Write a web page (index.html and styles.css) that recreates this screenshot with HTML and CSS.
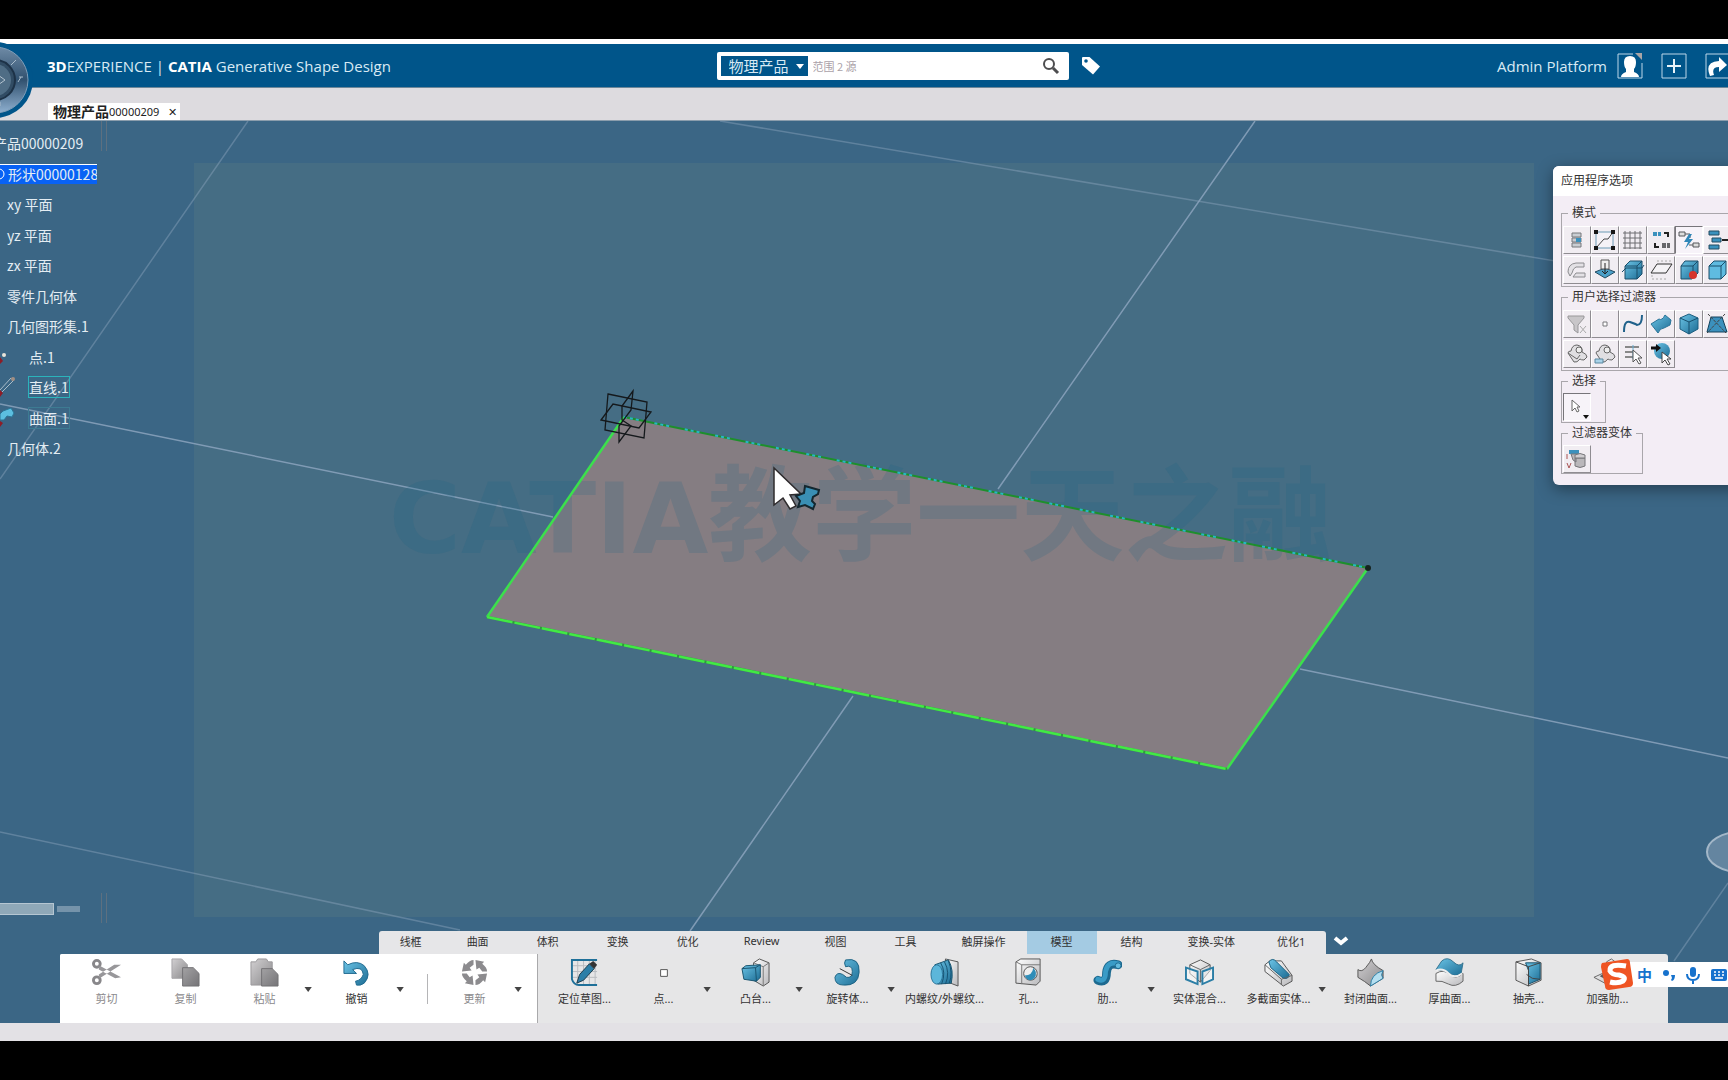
FILE: index.html
```html
<!DOCTYPE html>
<html lang="zh-CN">
<head>
    <meta charset="UTF-8">
    <meta name="viewport" content="width=device-width, initial-scale=1.0">
    <title>3DEXPERIENCE | CATIA Generative Shape Design</title>
    <link rel="stylesheet" href="styles.css">
</head>
<body>
    <!-- shared gradients -->
    <svg class="defs" aria-hidden="true">
        <defs>
            <linearGradient id="blue" x1="0" y1="0" x2="1" y2="1">
                <stop offset="0" stop-color="#6cc4e6"/>
                <stop offset="1" stop-color="#1c6c94"/>
            </linearGradient>
            <linearGradient id="grey" x1="0" y1="0" x2="1" y2="1">
                <stop offset="0" stop-color="#d2d0d2"/>
                <stop offset="1" stop-color="#8a898b"/>
            </linearGradient>
            <linearGradient id="dark" x1="0" y1="0" x2="1" y2="1">
                <stop offset="0" stop-color="#a3a2a4"/>
                <stop offset="1" stop-color="#757477"/>
            </linearGradient>
            <linearGradient id="white" x1="0" y1="0" x2="1" y2="1">
                <stop offset="0" stop-color="#ffffff"/>
                <stop offset="1" stop-color="#b9b9bc"/>
            </linearGradient>
            <linearGradient id="ring" x1="0" y1="0" x2="0" y2="1">
                <stop offset="0" stop-color="#6f8ba6"/>
                <stop offset="0.5" stop-color="#31516f"/>
                <stop offset="1" stop-color="#8fb0d0"/>
            </linearGradient>
        </defs>
    </svg>

    <header class="topbar">
        <h1 class="brand"><b>3D</b>EXPERIENCE | <b>CATIA</b> Generative Shape Design</h1>

        <form class="search">
            <div class="search-box">
                <span class="scope">
                    <select aria-label="搜索类型">
                        <option>物理产品</option>
                    </select>
                </span>
                <input type="text" placeholder="范围 2 源" aria-label="搜索">
                <button type="button" aria-label="搜索">
                    <svg width="18" height="18" viewBox="0 0 18 18"><circle cx="7" cy="7" r="5" fill="none" stroke="#4d4d4f" stroke-width="2"/><path d="M11 11l5 5" stroke="#4d4d4f" stroke-width="3"/></svg>
                </button>
            </div>
            <button type="button" aria-label="标签">
                <svg width="20" height="20" viewBox="0 0 20 20"><path d="M1 2q0-1 1-1h6.500l10.500 9.500-7 8L1 9z" fill="#fff"/><circle cx="5" cy="5" r="1.800" fill="#00558a"/></svg>
            </button>
        </form>

        <div class="account">
            <span>Admin Platform</span>
            <button type="button" aria-label="用户">
                <svg width="26" height="26" viewBox="0 0 26 26"><path d="M16 1H1v24h24V10" fill="none" stroke="#bcd7e8"/><path d="M4 24q0-3 5-5V16Q7 14 7 9q0-6 6-6t6 6q0 5-2 7v3q5 2 5 5z" fill="#fff"/><path d="M18 0h7v7z" fill="#a9a5a6"/></svg>
            </button>
            <button type="button" aria-label="添加">
                <svg width="26" height="26" viewBox="0 0 26 26"><path d="M1 1h24v24H1z" fill="none" stroke="#bcd7e8"/><path d="M6 13h14M13 6v14" stroke="#e9f3f8" stroke-width="2"/></svg>
            </button>
            <button type="button" aria-label="共享">
                <svg width="26" height="26" viewBox="0 0 26 26"><path d="M1 1h24v24H1z" fill="none" stroke="#bcd7e8"/><path d="M5 23Q-1 9 14 8V4l8 8-8 7v-5Q6 14 9 22z" fill="#fff"/></svg>
            </button>
        </div>

        <svg class="compass" width="34" height="78" viewBox="0 0 34 78">
            <circle cx="-5" cy="39" r="38" fill="#00558a"/>
            <circle cx="-5" cy="39" r="33" fill="url(#ring)" stroke="#7f9db8"/>
            <circle cx="-5" cy="39" r="20" fill="#314c64" stroke="#1d3247" stroke-width="2"/>
            <circle cx="-5" cy="39" r="16" fill="#4f6d85"/>
            <path d="M-2 34l7 5-7 5z" fill="none" stroke="#b3c2ce" stroke-width="1"/>
            <path d="M11 24l5-5M21 36l-3 5M23 36h-4M0 61v4" stroke="#a9bccb" fill="none"/>
        </svg>
    </header>

    <nav class="doc-tabs">
        <div class="doc-tab"><b>物理产品</b><span>00000209</span><button type="button" aria-label="关闭">✕</button></div>
    </nav>

    <main class="stage">
        <svg class="scene" viewBox="0 0 1728 902" preserveAspectRatio="xMidYMid slice">
            <rect x="194" y="42" width="1340" height="754" fill="#456d84"/>
            <g stroke="#8ba3bd" stroke-width="1.500">
                <path d="M248 0L0 358M720 0l1008 169M0 711l460 98M1728 762l-54 78" stroke-opacity=".45"/>
                <path d="M0 283l553 113M1300 548l428 89M1255 0L998 368M853 575L690 810" stroke-opacity=".85"/>
            </g>
            <ellipse cx="1740" cy="731" rx="33" ry="20" fill="#6485a0" stroke="#a3b7c8" stroke-width="2"/>

            <path d="M624 296l744 151-141 201-740-152z" fill="#857d82"/>
            <text x="389" y="432" class="watermark"><tspan class="latin">CATIA</tspan>教学一天之融</text>
            <path d="M624 296L487 496M1368 447l-141 201" stroke="#3be04c" stroke-width="2.500"/>
            <path d="M487 496l740 152" stroke="#2f9a3c" stroke-width="2.500"/>
            <path d="M487 496l740 152" stroke="#42e945" stroke-width="2.500" stroke-dasharray="26 2"/>
            <path d="M624 296l744 151" stroke="#1d8f2c" stroke-width="2"/>
            <path d="M624 296l744 151" stroke="#27b7c4" stroke-width="2" stroke-dasharray="3 3 3 3 3 16"/>
            <circle cx="1368" cy="447" r="3" fill="#16241f"/>

            <!-- origin planes -->
            <g fill="none" stroke="#15191c" stroke-width="1.300">
                <path d="M608 273l39 8-3 36-39-8z"/>
                <path d="M601 299l12-16 38 8-12 16z"/>
                <path d="M633 270l-11 15v14l9 6-12 16V305l12-16z"/>
            </g>

            <!-- cursor with pin -->
            <path d="M774 347v37l9-7 7 11 6-3-6-11 11-1z" fill="#fff" stroke="#2f2c2e" stroke-width="1.500"/>
            <path d="M805 365l14 4-1 4-5 3-1 4 3 3-2 5-8-4-7 2 2-6-4-5 8-3z" fill="#3a8fb4" stroke="#14272f" stroke-width="2"/>
        </svg>

        <ul class="tree">
            <li class="root">产品00000209</li>
            <li class="selected"><svg width="11" height="12" viewBox="0 0 11 12"><circle cx="2" cy="6" r="5" fill="none" stroke="#fff"/></svg>形状00000128</li>
            <li>xy 平面</li>
            <li>yz 平面</li>
            <li>zx 平面</li>
            <li>零件几何体</li>
            <li>几何图形集.1</li>
            <li class="leaf"><svg width="16" height="20" viewBox="0 0 16 20"><circle cx="4" cy="8" r="2" fill="#e9e4da"/><path d="M0 10l3 4-3 3z" fill="#8e1c26"/></svg><span>点.1</span></li>
            <li class="leaf"><svg width="16" height="20" viewBox="0 0 16 20"><path d="M0 13L11 1M2 15L14 3" stroke="#a9bcc8"/><path d="M0 13l3 3-3 4z" fill="#8e1c26"/><circle cx="13" cy="2" r="2" fill="#a28f84"/></svg><span class="picked">直线.1</span></li>
            <li class="leaf"><svg width="16" height="20" viewBox="0 0 16 20"><path d="M3 3l8-3 3 5-2 4-5-1-3 4H0V6z" fill="#5cbfe0" stroke="#2b7596"/><path d="M0 13l3 2-3 4z" fill="#8e1c26"/></svg><span class="hinted">曲面.1</span></li>
            <li>几何体.2</li>
        </ul>
        <span class="grip grip-top"></span>
        <span class="grip grip-bottom"></span>
        <div class="scroller"><i></i><b></b></div>

        <aside class="options">
            <h2>应用程序选项</h2>
            <fieldset>
                <legend>模式</legend>
                <div class="tools">
                    <button type="button" aria-label="结构树"><svg viewBox="0 0 24 24"><path d="M7 5h9v4H7zM7 10h9v4H7zM7 15h9v4H7z" fill="#c9cdd2" stroke="#77797d"/><path d="M11 10h5v4h-5z" fill="#3b91bd"/></svg></button>
                    <button type="button" aria-label="框选"><svg viewBox="0 0 24 24"><path d="M3 4h17v16H3z" fill="#f5f2f7" stroke="#6d9ab5"/><path d="M3 20l8-9h4l5-7" stroke="#444" fill="none"/><path d="M1 2h4v4H1zM18 2h4v4h-4zM1 18h4v4H1zM18 18h4v4h-4z" fill="#161616"/></svg></button>
                    <button type="button" aria-label="网格"><svg viewBox="0 0 24 24"><path d="M4 3v18M9 3v18M14 3v18M19 3v18M2 5h19M2 10h19M2 15h19M2 20h19" stroke="#6c6c70"/></svg></button>
                    <button type="button" aria-label="交换"><svg viewBox="0 0 24 24"><path d="M4 4h4v4H4zM9 4h3v4H9z" fill="#3b91bd"/><path d="M15 5h4v4M10 19H6v-4" fill="none" stroke="#222" stroke-width="2"/><path d="M13 15h4v5h-4zM18 15h3v5h-3z" fill="#66666a"/></svg></button>
                    <button type="button" class="pressed" aria-label="快速更新"><svg viewBox="0 0 24 24"><path d="M2 4h6v4H2zM16 15h6v4h-6z" fill="#ddd" stroke="#55575a"/><path d="M8 6h5v4M12 17h4" stroke="#55575a" fill="none"/><path d="M12 6L7 14h4l-3 7 8-10h-4l3-5z" fill="#2f86b8"/></svg></button>
                    <button type="button" aria-label="层级"><svg viewBox="0 0 24 24"><path d="M4 3h10v4H4zM7 10h9v4H7zM4 17h10v4H4z" fill="#3b91bd" stroke="#244c62"/><path d="M17 12h6" stroke="#222" stroke-width="2"/></svg></button>
                    <button type="button" aria-label="路径"><svg viewBox="0 0 24 24"><path d="M3 14q0-8 8-9h8v4h-8q-3 1-4 6l-2 3zM8 19h12v-4h-9z" fill="#e3e1e5" stroke="#8c8c90"/></svg></button>
                    <button type="button" aria-label="工作平面"><svg viewBox="0 0 24 24"><path d="M2 14l10-4 10 4-10 6z" fill="#4ba0c9" stroke="#244c62"/><path d="M8 2h8v9H8z" fill="#eee" stroke="#555"/><path d="M12 5v11M9 13l3 3 3-3" stroke="#222" fill="none"/></svg></button>
                    <button type="button" aria-label="实体"><svg viewBox="0 0 24 24"><path d="M4 8l5-5h12v13l-5 5H4z" fill="url(#blue)" stroke="#1b4e6b"/><path d="M4 8h12v13M16 8l5-5M1 14l4-4h16l2-3" stroke="#1b4e6b" fill="none"/></svg></button>
                    <button type="button" aria-label="平面"><svg viewBox="0 0 24 24"><path d="M2 15L8 6h15l-6 9z" fill="#f5f3f6" stroke="#333"/><path d="M3 21h15M3 17v4M8 3h14" stroke="#aaa" stroke-dasharray="2 2"/></svg></button>
                    <button type="button" aria-label="停用"><svg viewBox="0 0 24 24"><path d="M4 8l4-5h13v12l-6 6H4z" fill="url(#blue)" stroke="#1b4e6b"/><path d="M4 8h12v12M16 8l5-5" stroke="#1b4e6b" fill="none"/><circle cx="16" cy="17" r="4" fill="#d6352c"/></svg></button>
                    <button type="button" aria-label="透明"><svg viewBox="0 0 24 24"><path d="M4 8l5-5h12v13l-5 5H4z" fill="#5fbbe0" stroke="#1b4e6b"/><path d="M4 8h12v13M16 8l5-5" stroke="#1b4e6b" fill="none"/></svg></button>
                </div>
            </fieldset>
            <fieldset>
                <legend>用户选择过滤器</legend>
                <div class="tools">
                    <button type="button" aria-label="过滤器"><svg viewBox="0 0 24 24"><path d="M3 4h16v2l-6 7v8l-4-3v-5L3 6z" fill="#c8c6c9" stroke="#98979a"/><path d="M15 14l6 7M21 14l-6 7" stroke="#aaa"/></svg></button>
                    <button type="button" aria-label="点过滤"><svg viewBox="0 0 24 24"><path d="M10 10h4v4h-4z" fill="#fff" stroke="#77777b"/></svg></button>
                    <button type="button" aria-label="曲线过滤"><svg viewBox="0 0 24 24"><path d="M3 20Q3 8 9 10t7 3q5 0 5-10" fill="none" stroke="#20618a" stroke-width="2"/></svg></button>
                    <button type="button" aria-label="曲面过滤"><svg viewBox="0 0 24 24"><path d="M2 12l8-5q3 2 6-4l6 5-1 5-6 3q-4 0-6 5z" fill="url(#blue)" stroke="#2a7499"/></svg></button>
                    <button type="button" aria-label="体过滤"><svg viewBox="0 0 24 24"><path d="M3 6l9-4 9 4v11l-9 5-9-5z" fill="url(#blue)" stroke="#1b5e80"/><path d="M3 6l9 4 9-4M12 10v12" stroke="#164f6d" fill="none"/></svg></button>
                    <button type="button" aria-label="网格过滤"><svg viewBox="0 0 24 24"><path d="M6 5h11l5 15H2z" fill="#3b91bd" stroke="#14435c"/><path d="M3 2l18 19M20 2L2 21" stroke="#444" stroke-dasharray="3 1"/></svg></button>
                    <button type="button" aria-label="特征"><svg viewBox="0 0 24 24"><path d="M3 11q0-2 3-2 1-6 6-6 6 1 5 7 5 2 5 5l-3 3q-3 0-4-1-3 4-6 3z" fill="#e0dfe2" stroke="#666"/><circle cx="14" cy="8" r="3" fill="#eee" stroke="#666"/><path d="M3 11l9 6 3-4" stroke="#666" fill="none"/></svg></button>
                    <button type="button" aria-label="子特征"><svg viewBox="0 0 24 24"><path d="M3 11q0-2 3-2 1-6 6-6 6 1 5 7 5 2 5 5l-3 3q-3 0-4-1-3 4-6 3z" fill="#e0dfe2" stroke="#666"/><circle cx="14" cy="8" r="3" fill="#eee" stroke="#666"/><path d="M2 17h8v4H2z" fill="#a8d2e8" stroke="#5b88a0"/></svg></button>
                    <button type="button" aria-label="列表选择"><svg viewBox="0 0 24 24"><path d="M4 5h14M4 10h8M4 15h8" stroke="#888" stroke-width="2"/><path d="M12 3v14" stroke="#64acd0"/><path d="M12 8v12l3-3 3 5 2-1-3-5h4z" fill="#fff" stroke="#555"/></svg></button>
                    <button type="button" aria-label="选择对象"><svg viewBox="0 0 24 24"><circle cx="13" cy="9" r="8" fill="url(#blue)"/><path d="M2 6h5" stroke="#111" stroke-width="3"/><path d="M7 2l5 4-5 4z" fill="#111"/><path d="M13 10v11l3-3 3 5 2-1-3-5h4z" fill="#fff" stroke="#444"/></svg></button>
                </div>
            </fieldset>
            <fieldset class="fit">
                <legend>选择</legend>
                <div class="tools">
                    <button type="button" class="pressed" aria-label="箭头"><svg viewBox="0 0 24 24"><path d="M7 5v11l3-3 2 4 2-1-2-4h3z" fill="#fff" stroke="#666"/><path d="M18 20h6l-3 4z" fill="#111"/></svg></button>
                </div>
            </fieldset>
            <fieldset class="fit wide">
                <legend>过滤器变体</legend>
                <div class="tools">
                    <button type="button" aria-label="变体"><svg viewBox="0 0 24 24"><path d="M4 3h10v4H4z" fill="#3b91bd"/><path d="M2 16l2 5 2-5M2 7v5" stroke="#a55" fill="none"/><path d="M6 7h7l-2 4v4l-3-2zM10 11h10v8q-5 3-10 0z" fill="#b9b7ba" stroke="#77777b"/><path d="M10 8q5-3 10 0v3H10z" fill="#cfcdd0" stroke="#77777b"/></svg></button>
                </div>
            </fieldset>
        </aside>

        <div class="deck">
            <nav class="sections">
                <div class="section-list">
                    <button type="button">线框</button>
                    <button type="button">曲面</button>
                    <button type="button">体积</button>
                    <button type="button">变换</button>
                    <button type="button">优化</button>
                    <button type="button">Review</button>
                    <button type="button">视图</button>
                    <button type="button">工具</button>
                    <button type="button">触屏操作</button>
                    <button type="button" class="active">模型</button>
                    <button type="button">结构</button>
                    <button type="button">变换-实体</button>
                    <button type="button">优化1</button>
                </div>
                <button type="button" class="collapse" aria-label="折叠"><svg width="16" height="12" viewBox="0 0 16 12"><path d="M2 3l6 5 6-5" fill="none" stroke="#fff" stroke-width="4"/></svg></button>
            </nav>

            <div class="actions">
                <div class="common">
                    <button type="button" class="off"><svg viewBox="0 0 30 30"><g fill="none" stroke="#88878a" stroke-width="3"><circle cx="5" cy="6" r="3.500"/><circle cx="5" cy="23" r="3.500"/></g><path d="M8 8l22 12-6 1L7 12zM8 21L30 7l-7 0L7 17z" fill="#98979a"/></svg>剪切</button>
                    <button type="button" class="off"><svg viewBox="0 0 30 30"><path d="M1 1h10l6 6v14H1z" fill="url(#grey)" stroke="#a6a5a8"/><path d="M12 10h11l6 6v13H12z" fill="url(#dark)" stroke="#727174"/></svg>复制</button>
                    <button type="button" class="off"><svg viewBox="0 0 30 30"><path d="M1 4h5l2-3h9l2 3h4v24H1z" fill="url(#grey)" stroke="#9a999c"/><path d="M12 11h11l6 6v12H12z" fill="url(#dark)" stroke="#727174"/></svg>粘贴</button>
                    <i class="more"></i>
                    <button type="button"><svg viewBox="0 0 30 30"><path d="M2 3l4 4q10-5 17 1 8 9 0 18-4 3-8 2l-1-4q6-1 8-7-1-9-11-5l4 4H2z" fill="url(#blue)" stroke="#226b90"/></svg>撤销</button>
                    <i class="more"></i>
                    <span class="divider"></span>
                    <button type="button" class="off"><svg viewBox="0 0 30 30"><g fill="#8c8b8e"><path id="arc" d="M2 14l2-9 2 2q4-5 8-5v5l-4 3 2 3z"/><use href="#arc" transform="rotate(90 15 15)"/><use href="#arc" transform="rotate(180 15 15)"/><use href="#arc" transform="rotate(270 15 15)"/></g></svg>更新</button>
                    <i class="more"></i>
                </div>
                <div class="model">
                    <button type="button"><svg viewBox="0 0 30 30"><path d="M8 2v26M14 2v26M20 2v26M26 2v26M2 8h26M2 14h26M2 20h26" stroke="#b9bcc0"/><path d="M28 2H2v20q2 6 7 6h19" fill="none" stroke="#1f7099" stroke-width="2"/><path d="M7 26l3-9L20 6l5 5-11 12z" fill="#2c7fa8" stroke="#1b3a4b"/><path d="M20 6l4-3 4 4-3 4z" fill="#333"/></svg>定位草图...</button>
                    <button type="button"><svg viewBox="0 0 30 30"><path d="M12 12h7v7h-7z" fill="#fff" stroke="#555"/></svg>点...</button>
                    <i class="more"></i>
                    <button type="button"><svg viewBox="0 0 30 30"><path d="M13 5l6-4 10 4v20l-6 4-10-6z" fill="url(#white)" stroke="#555"/><path d="M13 5l10 4 6-4M23 9v20" stroke="#777" fill="none"/><path d="M1 11l4-3 15-1v13l-4 4-13-2z" fill="url(#blue)" stroke="#19546f"/><path d="M1 11l14-1 5-3M15 10l1 14" stroke="#19546f" fill="none"/></svg>凸台...</button>
                    <i class="more"></i>
                    <button type="button"><svg viewBox="0 0 30 30"><path d="M13 2q15-3 14 13-1 14-16 13Q2 28 2 20q2-6 8-3l4 3q6 1 6-6t-7-5q-2-4 0-7z" fill="url(#blue)" stroke="#1d6283"/><path d="M7 11l13 7" stroke="#333"/></svg>旋转体...</button>
                    <i class="more"></i>
                    <button type="button" class="broad"><svg viewBox="0 0 30 30"><path d="M16 1l13 3v25l-13-5z" fill="url(#white)" stroke="#555"/><path d="M5 7L19 2q6 10 3 24L8 27z" fill="url(#blue)" stroke="#19546f"/><ellipse cx="7" cy="17" rx="6" ry="10" fill="#5cb6da" stroke="#2a7499"/><path d="M11 5q6 10 1 22M15 4q6 11 1 23M19 3q5 12 1 23" fill="none" stroke="#155272"/></svg>内螺纹/外螺纹...</button>
                    <button type="button"><svg viewBox="0 0 30 30"><path d="M2 4l5-3h20v23l-4 4-21-2z" fill="url(#white)" stroke="#555"/><path d="M2 4l6 3h19M8 7v20" stroke="#777" fill="none"/><circle cx="17" cy="16" r="7" fill="#eee" stroke="#555"/><path d="M11 18q8 0 9-8 5 6 1 11-6 5-10-3z" fill="#2f8db8"/></svg>孔...</button>
                    <button type="button"><svg viewBox="0 0 30 30"><path d="M5 23q9 4 9-8Q15 4 26 7" fill="none" stroke="#1d6a90" stroke-width="9" stroke-linecap="round"/><path d="M5 22q8 4 8-8Q15 3 26 6" fill="none" stroke="#399bc6" stroke-width="5" stroke-linecap="round"/><circle cx="26" cy="8" r="3" fill="#64bbdd" stroke="#1d6a90"/></svg>肋...</button>
                    <i class="more"></i>
                    <button type="button"><svg viewBox="0 0 30 30"><path d="M5 7l11-5 10 5v6l-10 12L5 16z" fill="url(#white)" stroke="#555"/><path d="M5 7l11 5 10-5M16 12v13" stroke="#666" fill="none"/><path d="M1 10l12 4v13L1 22zM29 10l-11 4v13l11-5z" fill="#fff" fill-opacity=".5" stroke="#2b7ea6" stroke-width="2"/></svg>实体混合...</button>
                    <button type="button"><svg viewBox="0 0 30 30"><path d="M1 7l5-4L18 3l11 15v6l-9 5L1 14z" fill="url(#white)" stroke="#555"/><path d="M5 4q4-5 8 0l13 13q0 5-6 4L7 10z" fill="url(#blue)" stroke="#1d6283"/><path d="M1 7l17 15 11-4M18 22v6" stroke="#666" fill="none"/></svg>多截面实体...</button>
                    <i class="more"></i>
                    <button type="button"><svg viewBox="0 0 30 30"><path d="M16 1q1 6 12 12v8L15 29Q9 24 2 20v-8q4 3 8-2 5-6 6-9z" fill="url(#grey)" stroke="#555"/><path d="M15 29q0-12 13-16-3 5 0 8z" fill="#b5dff0" stroke="#2b7ea6"/></svg>封闭曲面...</button>
                    <button type="button"><svg viewBox="0 0 30 30"><path d="M1 16q8-5 14 1t14-1v8q-8 7-15 3T1 24z" fill="url(#white)" stroke="#666"/><path d="M1 12L7 3q6-5 12 1t10 1l-2 11q-6 4-12 0T1 12z" fill="url(#blue)" stroke="#35738f"/><path d="M1 13q7-3 13 3t14 0" fill="none" stroke="#eee" stroke-width="2"/></svg>厚曲面...</button>
                    <button type="button"><svg viewBox="0 0 30 30"><path d="M2 4l16-3 10 4v18l-13 6L2 23z" fill="url(#white)" stroke="#555"/><path d="M12 5h15v17l-12 5V13z" fill="url(#blue)" stroke="#14506d"/><path d="M2 4l13 5v20M15 9l12-4M13 17l6 4 8 1" fill="none" stroke="#444"/></svg>抽壳...</button>
                    <button type="button"><svg viewBox="0 0 30 30"><path d="M14 4l5-3 4 3v12l6 4-13 8L1 20l13-6z" fill="url(#white)" stroke="#666"/><path d="M7 19l10-8v13z" fill="#5a5a5d"/></svg>加强肋...</button>
                </div>
            </div>

            <div class="ime">
                <svg class="sogou" width="33" height="33" viewBox="0 0 33 33"><path d="M2 5l25-4q3 0 3 4l3 20q0 4-4 4L9 32q-4 0-4-4L1 9q0-3 1-4z" fill="#ef5423"/><path d="M26 8Q9 5 10 13q2 4 9 4 8 2 4 6-5 3-13 1" fill="none" stroke="#fff" stroke-width="5"/></svg>
                <button type="button">中</button>
                <button type="button" aria-label="标点"><svg width="14" height="14" viewBox="0 0 14 14"><circle cx="4" cy="5" r="3" fill="#1672cd"/><path d="M9 7h4q0 5-3 6l-1-1 1-2z" fill="#1672cd"/></svg></button>
                <button type="button" aria-label="语音"><svg width="14" height="18" viewBox="0 0 14 18"><rect x="4" y="1" width="6" height="10" rx="3" fill="#1672cd"/><path d="M1 8q0 6 6 6t6-6M7 14v4" fill="none" stroke="#1672cd" stroke-width="2"/></svg></button>
                <button type="button" aria-label="键盘"><svg width="18" height="14" viewBox="0 0 18 14"><rect x="1" y="1" width="16" height="12" rx="2" fill="#1672cd"/><path d="M4 4h2M8 4h2M12 4h2M4 7h2M8 7h2M12 7h2M5 10h8" stroke="#fff" stroke-width="1.500"/></svg></button>
            </div>
        </div>
    </main>

    <footer class="statusbar"></footer>
</body>
</html>
```
FILE: styles.css
```css
* {
    box-sizing: border-box;
}
body {
    margin: 0;
    padding: 39px 0;
    height: 100vh;
    display: flex;
    flex-direction: column;
    overflow: hidden;
    background: #000;
    color: #333;
    font-family: "Noto Sans", "Noto Sans CJK SC", sans-serif;
    font-size: 11px;
}
button {
    padding: 0;
    border: 0;
    background: none;
    color: inherit;
    font: inherit;
    cursor: pointer;
}
svg {
    display: block;
    flex: none;
}
.defs {
    position: absolute;
    width: 0;
    height: 0;
}

/* top bar */
.topbar {
    position: relative;
    z-index: 2;
    display: grid;
    grid-template-columns: 1fr auto 1fr;
    align-items: center;
    height: 49px;
    padding-left: 47px;
    border-top: 5px solid #fff;
    border-bottom: 1px solid #6c8799;
    background: #00558a;
    color: #d8eaf4;
    font-family: "Open Sans", "Noto Sans CJK SC", sans-serif;
}
.brand {
    margin: 0;
    font-size: 15px;
    font-weight: 400;
    white-space: nowrap;
}
.brand b {
    color: #fff;
}
.search {
    display: flex;
    align-items: center;
    gap: 12px;
    padding-left: 42px;
}
.search-box {
    display: flex;
    align-items: center;
    width: 352px;
    height: 28px;
    padding: 0 9px 0 4px;
    border-radius: 2px;
    background: #fff;
}
.scope {
    position: relative;
    display: flex;
    width: 87px;
    height: 20px;
    background: #00558a;
}
.scope::after {
    content: "";
    position: absolute;
    right: 4px;
    top: 8px;
    border: 4px solid transparent;
    border-top: 5px solid #fff;
    border-bottom: 0;
}
.scope select {
    width: 100%;
    padding: 0 0 0 8px;
    border: 0;
    appearance: none;
    background: none;
    color: #d8eaf4;
    font-family: "Noto Sans CJK SC", sans-serif;
    font-size: 15px;
    line-height: 20px;
}
.search-box input {
    flex: 1;
    min-width: 0;
    padding: 0 5px;
    border: 0;
    background: none;
    font-family: "Noto Sans CJK SC", sans-serif;
    font-size: 11px;
    outline: none;
}
.search-box input::placeholder {
    color: #aaa1a8;
}
.account {
    display: flex;
    align-items: center;
    justify-content: flex-end;
    gap: 18px;
    margin-right: -3px;
    font-size: 15px;
    white-space: nowrap;
}
.account span {
    margin-right: -8px;
}
.compass {
    position: absolute;
    left: 0;
    top: -3px;
}

/* document tabs */
.doc-tabs {
    display: flex;
    align-items: flex-end;
    height: 33px;
    padding-left: 48px;
    background: #dddbdf;
    border-bottom: 1px solid #8b9dac;
}
.doc-tab {
    display: flex;
    align-items: center;
    height: 17px;
    padding: 0 3px 0 5px;
    background: #fff;
    color: #222;
}
.doc-tab b {
    font-size: 14px;
    line-height: 17px;
}
.doc-tab button {
    margin-left: 9px;
    font-size: 11px;
}

/* 3D viewport */
.stage {
    position: relative;
    flex: 1;
    display: flex;
    flex-direction: column;
    justify-content: flex-end;
    min-height: 0;
    background: #3b6685;
}
.scene {
    position: absolute;
    inset: 0;
    width: 100%;
    height: 100%;
}
.watermark {
    fill: rgba(20, 98, 134, 0.18);
    font-family: "Noto Sans CJK SC", sans-serif;
    font-size: 104px;
    font-weight: 700;
}
.watermark .latin {
    font-family: "DejaVu Sans", sans-serif;
    font-size: 98px;
}
.tree {
    position: absolute;
    left: 0;
    top: 7px;
    display: flex;
    flex-direction: column;
    justify-content: space-between;
    width: 97px;
    height: 335px;
    margin: 0;
    padding: 0;
    overflow: hidden;
    list-style: none;
    color: #e4edf3;
    font-family: "Noto Sans CJK SC", sans-serif;
    font-size: 14px;
    line-height: 20px;
}
.tree li {
    display: flex;
    align-items: center;
    height: 30px;
    padding-left: 7px;
    white-space: nowrap;
}
.tree .root {
    padding-left: 0;
    margin-left: -7px;
}
.tree .selected {
    height: 20px;
    margin: 5px 0;
    padding-left: 0;
    background: #0862f5;
    border-top: 1px solid #fff;
}
.tree .selected svg {
    margin-left: -3px;
}
.tree .leaf {
    gap: 12px;
    padding-left: 0;
}
.tree .leaf span {
    border: 1px solid transparent;
}
.tree .leaf .picked {
    border-color: #2bb3bb;
}
.tree .leaf .hinted {
    border-color: #3d7b92;
}
.grip {
    position: absolute;
    left: 101px;
    width: 6px;
    height: 30px;
    border: solid #5d7080;
    border-width: 0 1px;
}
.grip-top {
    top: 0;
}
.grip-bottom {
    bottom: 100px;
}
.scroller {
    position: absolute;
    left: 0;
    bottom: 108px;
    display: flex;
    align-items: center;
    gap: 3px;
}
.scroller i {
    width: 54px;
    height: 12px;
    border: 1px solid #b5c6d2;
    border-left: 0;
    background: #8fa8b8;
}
.scroller b {
    width: 23px;
    height: 6px;
    background: #7593aa;
}

/* options palette */
.options {
    position: absolute;
    top: 45px;
    right: -22px;
    width: 197px;
    padding: 0 0 9px 8px;
    border-radius: 6px;
    background: #f3edf5;
    box-shadow: 0 4px 16px rgba(0, 0, 0, 0.4);
    color: #333;
}
.options h2 {
    margin: 0 0 9px -8px;
    padding-left: 8px;
    border-radius: 6px 0 0 0;
    background: #fff;
    font-size: 12px;
    font-weight: 400;
    line-height: 30px;
}
.options fieldset {
    min-width: 0;
    margin: 0 0 2px;
    padding: 5px 0 2px 1px;
    border: 1px solid #a9a6ab;
}
.options legend {
    margin-left: 5px;
    padding: 0 4px;
    font-size: 12px;
    line-height: 16px;
}
.options .fit {
    width: 45px;
    padding: 4px 0 1px 1px;
}
.options .wide {
    width: 82px;
    padding-bottom: 0;
}
.tools {
    display: flex;
    flex-wrap: wrap;
    gap: 2px 0;
    width: 168px;
}
.options .fit .tools {
    width: auto;
}
.tools button {
    width: 28px;
    height: 28px;
    padding: 1px;
    border: 1px solid;
    border-color: #fff #8f8c91 #8f8c91 #fff;
    background: #f1edf2;
}
.tools svg {
    width: 24px;
    height: 24px;
}
.tools .pressed {
    border-color: #77757a #fff #fff #77757a;
    background: #f7f3f9;
}

/* action bar */
.deck {
    position: relative;
    padding: 0 60px;
}
.sections {
    display: flex;
    align-items: center;
    justify-content: center;
    gap: 7px;
    height: 23px;
}
.section-list {
    display: flex;
    height: 23px;
    border-radius: 3px 3px 0 0;
    background: #e6e6e8;
    overflow: hidden;
}
.section-list button {
    min-width: 70px;
    padding: 0 21px 4px;
}
.section-list button:first-child {
    min-width: 64px;
}
.section-list .active {
    background: #a4cbe3;
}
.collapse {
    padding-bottom: 4px;
}
.actions {
    display: flex;
    height: 69px;
    border-radius: 2px 3px 0 0;
    background: #e6e6e7;
    overflow: hidden;
}
.common,
.model {
    display: flex;
    padding: 4px 0 0 7px;
}
.common {
    width: 478px;
    border-right: 1px solid #a9a9ab;
    background: #fff;
}
.model {
    flex: 1;
}
.common button,
.model button {
    display: flex;
    flex-direction: column;
    align-items: center;
    width: 79px;
    height: 50px;
    line-height: 16px;
    white-space: nowrap;
}
.common svg,
.model svg {
    width: 29px;
    height: 29px;
    margin-bottom: 4px;
}
.common .off {
    color: #8a898c;
}
.model .broad {
    width: 89px;
}
.more {
    width: 13px;
    height: 5px;
    margin-top: 29px;
    background: #444;
    clip-path: polygon(4% 0, 60% 0, 32% 100%);
}
.divider {
    width: 1px;
    height: 30px;
    margin: 16px 7px 0 18px;
    background: #b5b5b7;
}

/* input method bar */
.ime {
    position: absolute;
    right: 0;
    top: 31px;
    display: flex;
    align-items: center;
    gap: 10px;
    width: 100px;
    height: 25px;
    background: #fff;
    color: #1672cd;
    font-family: "Noto Sans CJK SC", sans-serif;
    font-size: 15px;
    font-weight: 700;
    line-height: 20px;
}
.sogou {
    margin: 0 -6px 0 -28px;
}

.statusbar {
    height: 18px;
    background: #e3e1e5;
}
```
